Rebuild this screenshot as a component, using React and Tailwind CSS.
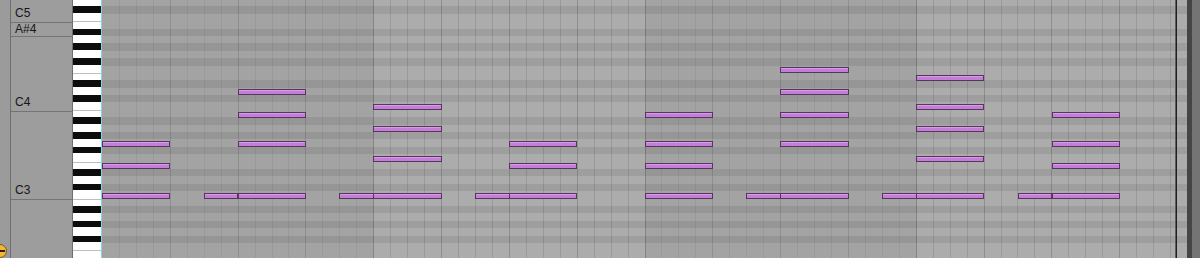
const ROW_H = 7.4;
const ROWS = 35;
const STEP = 16.96;

// semitone offset from C3 for row index (row 26 = C3)
const pcOf = (row) => (((26 - row) % 12) + 12) % 12;
const isBlack = (row) => [1, 3, 6, 8, 10].includes(pcOf(row));

// rows: F4=9, E4=10, D4=12, C4=14, B3=15, A3=17, G3=19, F3=21, E3=22, C3=26
const chords = [
  { start: 0, rows: [19, 22, 26] },
  { start: 6, len: 2, rows: [26] },
  { start: 8, rows: [12, 15, 19, 26] },
  { start: 14, len: 2, rows: [26] },
  { start: 16, rows: [14, 17, 21, 26] },
  { start: 22, len: 2, rows: [26] },
  { start: 24, rows: [19, 22, 26] },
  { start: 32, rows: [15, 19, 22, 26] },
  { start: 38, len: 2, rows: [26] },
  { start: 40, rows: [9, 12, 15, 19, 26] },
  { start: 46, len: 2, rows: [26] },
  { start: 48, rows: [10, 14, 17, 21, 26] },
  { start: 54, len: 2, rows: [26] },
  { start: 56, rows: [15, 19, 22, 26] },
];

const notes = chords.flatMap((c) =>
  c.rows.map((r) => ({ start: c.start, len: c.len || 4, row: r }))
);

function Keys() {
  return (
    <div className="w-[28px] shrink-0 flex flex-col -mt-px">
      {Array.from({ length: ROWS }).map((_, i) => {
        const pc = pcOf(i);
        if (isBlack(i)) {
          return (
            <div key={i} className="h-[7.4px] shrink-0 bg-white">
              <div className="h-[6.6px] bg-[#0c0c0c]" />
            </div>
          );
        }
        return (
          <div
            key={i}
            className={`h-[7.4px] shrink-0 bg-white ${
              pc === 11 || pc === 4 ? "border-t border-[#bdbdbd]" : ""
            }`}
          />
        );
      })}
    </div>
  );
}

function Labels() {
  const label = "text-[12px] leading-[11px] text-[#161616] pl-[4px]";
  return (
    <div className="w-[61px] shrink-0 flex flex-col bg-[#9d9d9d]">
      <div className={`h-[23px] shrink-0 border-b border-[#747474] flex items-end pb-[3px] ${label}`}>C5</div>
      <div className={`h-[14px] shrink-0 border-b border-[#747474] flex items-end pb-px ${label}`}>A#4</div>
      <div className={`h-[75px] shrink-0 border-b border-[#747474] flex items-end pb-[3px] ${label}`}>C4</div>
      <div className={`h-[88px] shrink-0 border-b border-[#747474] flex items-end pb-[3px] ${label}`}>C3</div>
      <div className="flex-1" />
    </div>
  );
}

function Grid() {
  return (
    <div className="relative w-[1085px] shrink-0 h-full overflow-hidden">
      {/* bars + time lines */}
      <div className="flex h-full">
        {[0, 1, 2, 3].map((b) => (
          <div
            key={b}
            className={`flex shrink-0 h-full ${b % 2 === 0 ? "bg-[#a3a3a3]" : "bg-[#acacac]"}`}
          >
            {Array.from({ length: 16 }).map((_, s) => (
              <div
                key={s}
                className={`w-[16.96px] shrink-0 h-full border-l ${
                  s === 0
                    ? b === 0
                      ? "border-transparent"
                      : "border-[#848484]"
                    : s % 4 === 0
                    ? "border-[#8f8f8f]"
                    : "border-[#9a9a9a]"
                }`}
              />
            ))}
          </div>
        ))}
      </div>

      {/* key row shading */}
      <div className="absolute inset-0 flex flex-col -mt-px pointer-events-none">
        {Array.from({ length: ROWS }).map((_, i) => (
          <div
            key={i}
            className={`h-[7.4px] shrink-0 ${isBlack(i) ? "bg-black/[0.08]" : ""}`}
          />
        ))}
      </div>

      {/* clip end marker */}
      <div className="absolute top-0 bottom-0 left-[1074px] w-px bg-[#1f1f1f]" />
      <div className="absolute top-0 bottom-0 left-[1073px] w-px bg-[#5d5d5d]" />

      {/* notes */}
      {notes.map((n, i) => (
        <div
          key={i}
          className="absolute h-[6px] bg-[#c67dd9] border border-[#533859] shadow-[inset_0_1px_0_#d79ce6]"
          style={{
            left: n.start * STEP,
            width: n.len * STEP + 0.5,
            top: n.row * ROW_H - 1 + 1.6,
          }}
        />
      ))}
    </div>
  );
}

export default function App() {
  return (
    <div
      className="relative w-[1200px] h-[258px] overflow-hidden flex bg-[#9d9d9d]"
      style={{ fontFamily: '"Liberation Sans", Arial, sans-serif' }}
    >
      <div className="w-[11px] shrink-0 h-full bg-[#9b9b9b] border-r border-[#6e6e6e]" />
      <div className="shrink-0 h-full border-r border-[#6e6e6e] flex">
        <Labels />
      </div>
      <Keys />
      <div className="w-px shrink-0 h-full bg-[#7fd6e6]" />
      <Grid />
      <div className="w-[5px] shrink-0 h-full bg-[#454545]" />
      <div className="flex-1 h-full bg-[#747474]" />

      {/* fold / zoom button */}
      <div className="absolute left-[-7px] top-[244px] w-[14px] h-[14px] rounded-full bg-[#f3b636] border border-[#7a5a1a] flex items-center justify-end pr-[1px]">
        <div className="w-[6px] h-[1.5px] bg-[#2a2010]" />
      </div>
    </div>
  );
}
